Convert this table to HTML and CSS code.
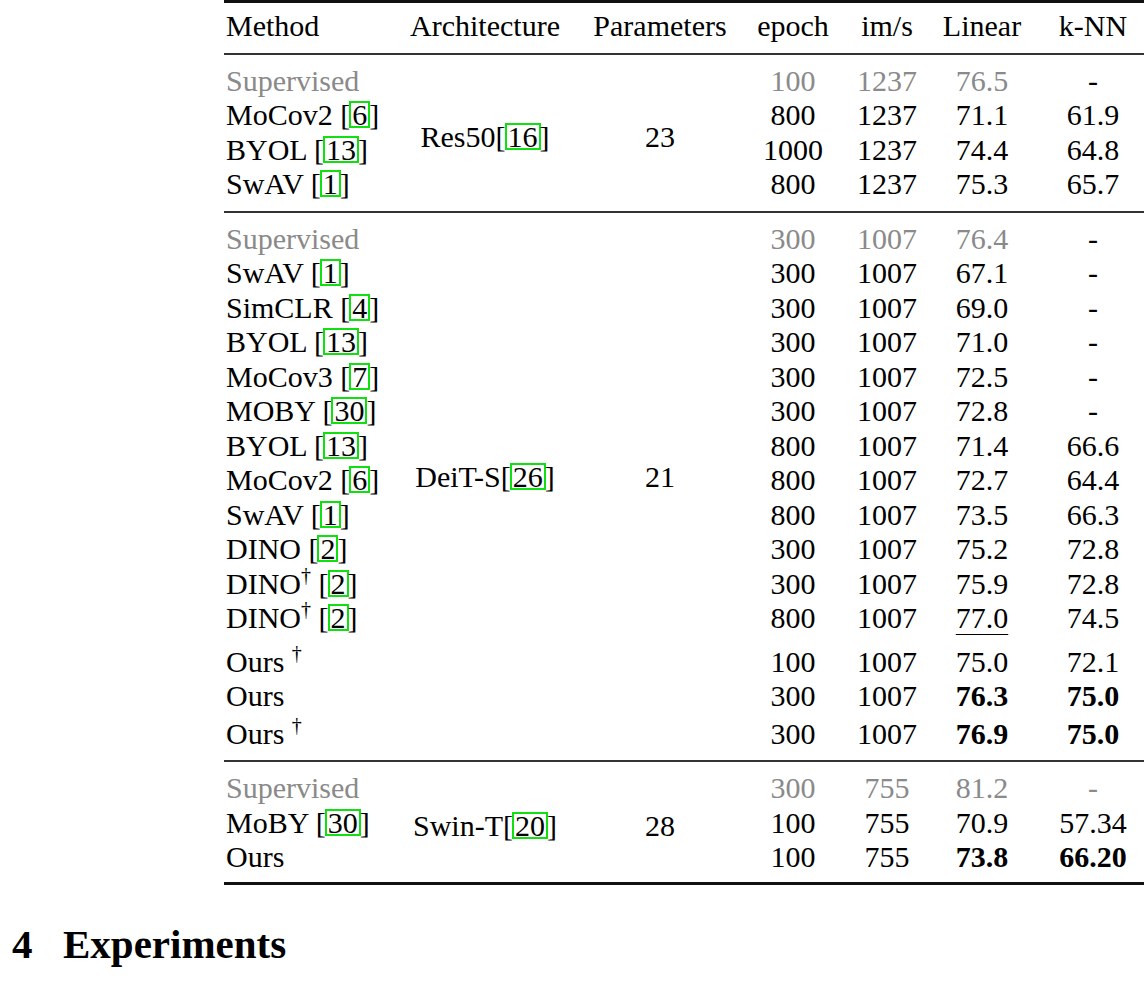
FILE: index.html
```html
<!DOCTYPE html>
<html lang="en">
<head>
<meta charset="utf-8">
<title>Results table</title>
<link rel="stylesheet" href="styles.css">
</head>
<body>
<main class="page">
  <table class="results">
    <colgroup>
      <col class="c-method">
      <col class="c-arch">
      <col class="c-params">
      <col class="c-epoch">
      <col class="c-ims">
      <col class="c-linear">
      <col class="c-knn">
    </colgroup>
    <thead>
      <tr>
        <th class="m">Method</th>
        <th>Architecture</th>
        <th>Parameters</th>
        <th>epoch</th>
        <th>im/s</th>
        <th>Linear</th>
        <th class="k">k-NN</th>
      </tr>
    </thead>
    <tbody>
      <tr class="first grey">
        <td class="m">Supervised</td>
        <td class="span" rowspan="4">Res50[<span class="cite">16</span>]</td>
        <td class="span" rowspan="4">23</td>
        <td>100</td><td>1237</td><td>76.5</td><td class="k blk">-</td>
      </tr>
      <tr>
        <td class="m">MoCov2 [<span class="cite">6</span>]</td>
        <td>800</td><td>1237</td><td>71.1</td><td class="k">61.9</td>
      </tr>
      <tr>
        <td class="m">BYOL [<span class="cite">13</span>]</td>
        <td>1000</td><td>1237</td><td>74.4</td><td class="k">64.8</td>
      </tr>
      <tr class="last">
        <td class="m">SwAV [<span class="cite">1</span>]</td>
        <td>800</td><td>1237</td><td>75.3</td><td class="k">65.7</td>
      </tr>
    </tbody>
    <tbody>
      <tr class="first grey">
        <td class="m">Supervised</td>
        <td class="span deit" rowspan="15">DeiT-S[<span class="cite">26</span>]</td>
        <td class="span deit" rowspan="15">21</td>
        <td>300</td><td>1007</td><td>76.4</td><td class="k blk">-</td>
      </tr>
      <tr>
        <td class="m">SwAV [<span class="cite">1</span>]</td>
        <td>300</td><td>1007</td><td>67.1</td><td class="k">-</td>
      </tr>
      <tr>
        <td class="m">SimCLR [<span class="cite">4</span>]</td>
        <td>300</td><td>1007</td><td>69.0</td><td class="k">-</td>
      </tr>
      <tr>
        <td class="m">BYOL [<span class="cite">13</span>]</td>
        <td>300</td><td>1007</td><td>71.0</td><td class="k">-</td>
      </tr>
      <tr>
        <td class="m">MoCov3 [<span class="cite">7</span>]</td>
        <td>300</td><td>1007</td><td>72.5</td><td class="k">-</td>
      </tr>
      <tr>
        <td class="m">MOBY [<span class="cite">30</span>]</td>
        <td>300</td><td>1007</td><td>72.8</td><td class="k">-</td>
      </tr>
      <tr>
        <td class="m">BYOL [<span class="cite">13</span>]</td>
        <td>800</td><td>1007</td><td>71.4</td><td class="k">66.6</td>
      </tr>
      <tr>
        <td class="m">MoCov2 [<span class="cite">6</span>]</td>
        <td>800</td><td>1007</td><td>72.7</td><td class="k">64.4</td>
      </tr>
      <tr>
        <td class="m">SwAV [<span class="cite">1</span>]</td>
        <td>800</td><td>1007</td><td>73.5</td><td class="k">66.3</td>
      </tr>
      <tr>
        <td class="m">DINO [<span class="cite">2</span>]</td>
        <td>300</td><td>1007</td><td>75.2</td><td class="k">72.8</td>
      </tr>
      <tr>
        <td class="m">DINO<sup class="dag">†</sup> [<span class="cite">2</span>]</td>
        <td>300</td><td>1007</td><td>75.9</td><td class="k">72.8</td>
      </tr>
      <tr>
        <td class="m">DINO<sup class="dag">†</sup> [<span class="cite">2</span>]</td>
        <td>800</td><td>1007</td><td><span class="ul">77.0</span></td><td class="k">74.5</td>
      </tr>
      <tr class="tall">
        <td class="m">Ours <sup class="dag">†</sup></td>
        <td>100</td><td>1007</td><td>75.0</td><td class="k">72.1</td>
      </tr>
      <tr>
        <td class="m">Ours</td>
        <td>300</td><td>1007</td><td class="b">76.3</td><td class="k b">75.0</td>
      </tr>
      <tr class="last tall2">
        <td class="m">Ours <sup class="dag">†</sup></td>
        <td>300</td><td>1007</td><td class="b">76.9</td><td class="k b">75.0</td>
      </tr>
    </tbody>
    <tbody class="end">
      <tr class="first grey">
        <td class="m">Supervised</td>
        <td class="span" rowspan="3">Swin-T[<span class="cite">20</span>]</td>
        <td class="span" rowspan="3">28</td>
        <td>300</td><td>755</td><td>81.2</td><td class="k">-</td>
      </tr>
      <tr>
        <td class="m">MoBY [<span class="cite">30</span>]</td>
        <td>100</td><td>755</td><td>70.9</td><td class="k">57.34</td>
      </tr>
      <tr class="last">
        <td class="m">Ours</td>
        <td>100</td><td>755</td><td class="b">73.8</td><td class="k b">66.20</td>
      </tr>
    </tbody>
  </table>

  <h2 class="section"><span class="num">4</span><span class="title">Experiments</span></h2>
</main>
</body>
</html>
```

FILE: styles.css
```css
html, body {
  margin: 0;
  padding: 0;
  background: #ffffff;
}

body {
  font-family: "Liberation Serif", "Times New Roman", serif;
  color: #000;
  overflow: hidden;
}

.page {
  width: 1144px;
}

.results {
  margin-left: 224px;
  width: 920px;
  border-collapse: collapse;
  table-layout: fixed;
  font-size: 30px;
  line-height: 34.5px;
  border-top: 3px solid #111;
}

.c-method { width: 176px; }
.c-arch { width: 170px; }
.c-params { width: 180px; }
.c-epoch { width: 86px; }
.c-ims { width: 102px; }
.c-linear { width: 88px; }
.c-knn { width: 118px; }

.results th,
.results td {
  padding: 0;
  text-align: center;
  font-weight: normal;
  white-space: nowrap;
  vertical-align: top;
}

.results th {
  padding-top: 6px;
  padding-bottom: 9px;
}

.results .m {
  text-align: left;
  padding-left: 2px;
}

.results .k {
  padding-left: 16px;
}

.results tbody {
  border-top: 2px solid #333;
}

.results tbody.end {
  border-bottom: 3px solid #111;
}

.results tr.first td {
  padding-top: 9px;
}

.results tr.last td {
  padding-bottom: 9px;
}

.results tbody.end tr.last td {
  padding-bottom: 7px;
}

.results td.span {
  vertical-align: middle;
  padding-top: 0;
  padding-bottom: 0;
}

.results td.deit {
  padding-bottom: 28px;
}

.results tr.grey td {
  color: #8a8a8a;
}

.results tr.grey td.span {
  color: #000;
}

.results tr.grey td.blk {
  color: #000;
}

.results tr.tall td {
  padding-top: 9px;
}

.results tr.tall2 td {
  padding-top: 3px;
}

.results .b {
  font-weight: bold;
}

.ul {
  text-decoration: underline;
  text-decoration-thickness: 1px;
  text-underline-offset: 6px;
}

.dag {
  font-size: 20px;
  line-height: 0;
  vertical-align: 12px;
  color: #000;
}

.cite {
  display: inline-block;
  line-height: 23px;
  border: 2px solid #10e010;
  padding: 0 1px;
  margin: 0 -1px;
}

.section {
  margin: 35px 0 0 12px;
  font-size: 41px;
  line-height: 48px;
  font-weight: bold;
  display: flex;
}

.section .num {
  width: 51px;
}
```
